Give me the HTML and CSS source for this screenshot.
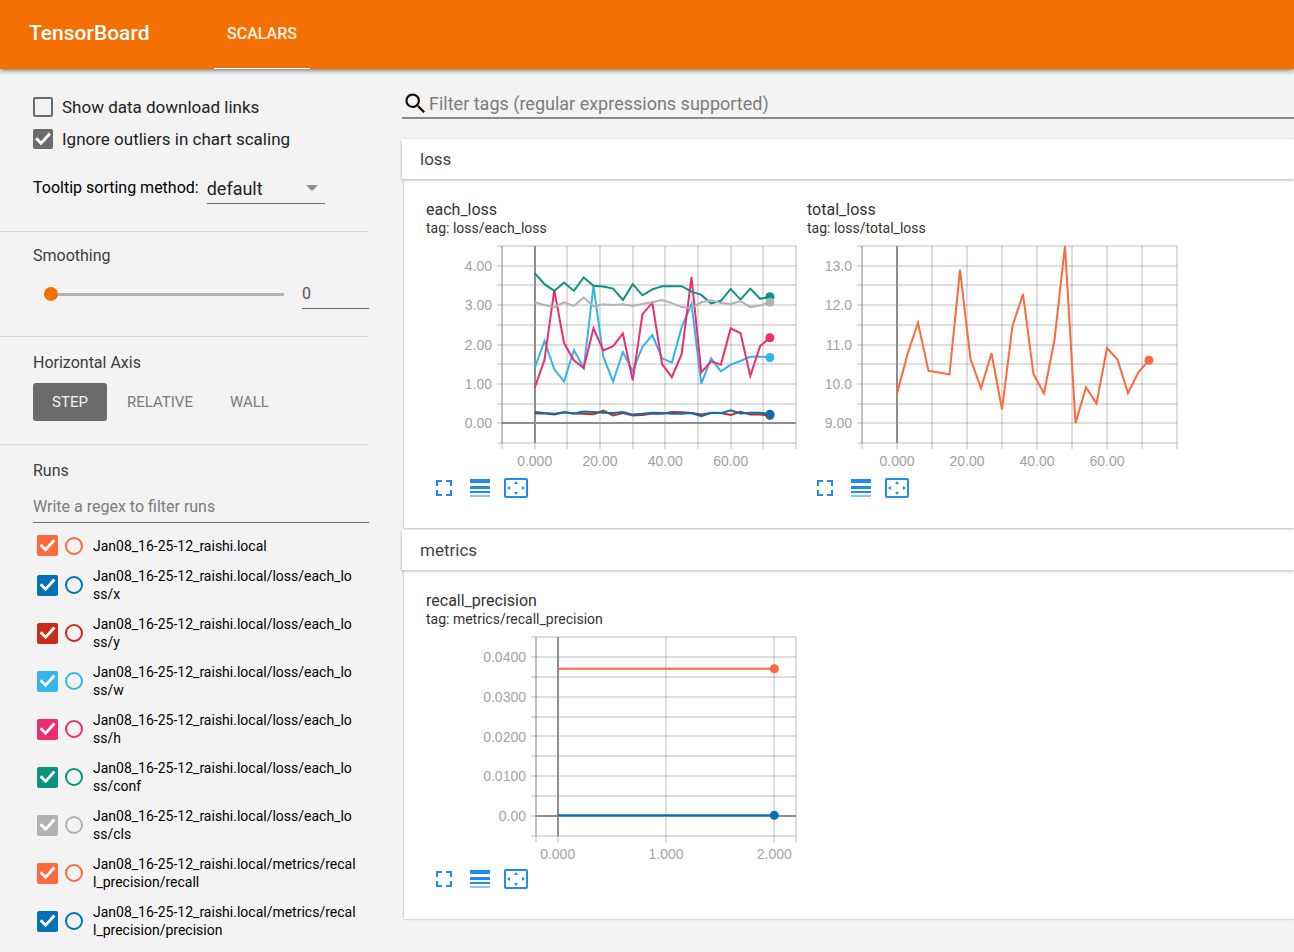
FILE: index.html
```html
<!DOCTYPE html>
<html lang="en">
<head>
    <meta charset="UTF-8">
    <meta name="viewport" content="width=device-width, initial-scale=1.0">
    <title>TensorBoard</title>
    <link rel="stylesheet" href="styles.css">
</head>
<body>

<header class="toolbar">
    <h1 class="toolbar-title">TensorBoard</h1>
    <nav class="tabs">
        <a href="#scalars" class="tab active">SCALARS</a>
    </nav>
</header>

<div class="layout">
    <aside class="sidebar">
        <section class="settings options">
            <div class="option">
                <input type="checkbox" id="downloadLinks" class="checkbox">
                <label for="downloadLinks">Show data download links</label>
            </div>
            <div class="option">
                <input type="checkbox" id="ignoreOutliers" class="checkbox" checked>
                <label for="ignoreOutliers">Ignore outliers in chart scaling</label>
            </div>
            <div class="tooltip-sort">
                <label for="tooltipSort">Tooltip sorting method:</label>
                <div class="dropdown">
                    <select id="tooltipSort">
                        <option>default</option>
                        <option>descending</option>
                        <option>ascending</option>
                        <option>nearest</option>
                    </select>
                </div>
            </div>
        </section>

        <section class="settings smoothing">
            <h2 id="smoothingTitle">Smoothing</h2>
            <div class="slider-row">
                <input type="range" id="smoothing" class="slider" min="0" max="1" step="0.001" value="0" aria-labelledby="smoothingTitle">
                <input type="text" id="smoothingValue" class="slider-value" value="0" aria-labelledby="smoothingTitle">
            </div>
        </section>

        <section class="settings axis">
            <h2>Horizontal Axis</h2>
            <div class="axis-buttons">
                <button type="button" class="axis-button selected">STEP</button>
                <button type="button" class="axis-button">RELATIVE</button>
                <button type="button" class="axis-button">WALL</button>
            </div>
        </section>

        <section class="settings runs">
            <h2>Runs</h2>
            <input type="text" class="runs-filter" placeholder="Write a regex to filter runs" aria-label="Write a regex to filter runs">
            <div class="run orange">
                <input type="checkbox" id="run0" class="checkbox" checked>
                <input type="radio" name="isolate" class="isolate" aria-label="Isolate run">
                <label for="run0">Jan08_16-25-12_raishi.local</label>
            </div>
            <div class="run blue">
                <input type="checkbox" id="run1" class="checkbox" checked>
                <input type="radio" name="isolate" class="isolate" aria-label="Isolate x">
                <label for="run1">Jan08_16-25-12_raishi.local/loss/each_loss/x</label>
            </div>
            <div class="run red">
                <input type="checkbox" id="run2" class="checkbox" checked>
                <input type="radio" name="isolate" class="isolate" aria-label="Isolate y">
                <label for="run2">Jan08_16-25-12_raishi.local/loss/each_loss/y</label>
            </div>
            <div class="run cyan">
                <input type="checkbox" id="run3" class="checkbox" checked>
                <input type="radio" name="isolate" class="isolate" aria-label="Isolate w">
                <label for="run3">Jan08_16-25-12_raishi.local/loss/each_loss/w</label>
            </div>
            <div class="run pink">
                <input type="checkbox" id="run4" class="checkbox" checked>
                <input type="radio" name="isolate" class="isolate" aria-label="Isolate h">
                <label for="run4">Jan08_16-25-12_raishi.local/loss/each_loss/h</label>
            </div>
            <div class="run teal">
                <input type="checkbox" id="run5" class="checkbox" checked>
                <input type="radio" name="isolate" class="isolate" aria-label="Isolate conf">
                <label for="run5">Jan08_16-25-12_raishi.local/loss/each_loss/conf</label>
            </div>
            <div class="run gray">
                <input type="checkbox" id="run6" class="checkbox" checked>
                <input type="radio" name="isolate" class="isolate" aria-label="Isolate cls">
                <label for="run6">Jan08_16-25-12_raishi.local/loss/each_loss/cls</label>
            </div>
            <div class="run orange">
                <input type="checkbox" id="run7" class="checkbox" checked>
                <input type="radio" name="isolate" class="isolate" aria-label="Isolate recall">
                <label for="run7">Jan08_16-25-12_raishi.local/metrics/recall_precision/recall</label>
            </div>
            <div class="run blue">
                <input type="checkbox" id="run8" class="checkbox" checked>
                <input type="radio" name="isolate" class="isolate" aria-label="Isolate precision">
                <label for="run8">Jan08_16-25-12_raishi.local/metrics/recall_precision/precision</label>
            </div>
        </section>
    </aside>

    <main class="content" id="scalars">
        <div class="tag-filter">
            <svg class="search-icon" viewBox="0 0 24 24"><path d="M15.5 14h-.79l-.28-.27A6.471 6.471 0 0 0 16 9.5 6.5 6.5 0 1 0 9.500 16c1.610 0 3.090-.59 4.230-1.570l.27.28v.79l5 4.990L20.490 19l-4.990-5zm-6 0C7.010 14 5 11.990 5 9.500S7.010 5 9.500 5 14 7.010 14 9.500 11.990 14 9.500 14z"/></svg>
            <input type="text" placeholder="Filter tags (regular expressions supported)" aria-label="Filter tags">
        </div>

        <section class="category">
            <button type="button" class="category-name">loss</button>
            <div class="category-body">
                <article class="card">
                    <h3>each_loss</h3>
                    <p>tag: loss/each_loss</p>
                    <svg class="chart" id="eachLoss" viewBox="0 0 371 232"></svg>
                    <div class="card-actions"></div>
                </article>
                <article class="card">
                    <h3>total_loss</h3>
                    <p>tag: loss/total_loss</p>
                    <svg class="chart" id="totalLoss" viewBox="0 0 371 232"></svg>
                    <div class="card-actions"></div>
                </article>
            </div>
        </section>

        <section class="category">
            <button type="button" class="category-name">metrics</button>
            <div class="category-body">
                <article class="card">
                    <h3>recall_precision</h3>
                    <p>tag: metrics/recall_precision</p>
                    <svg class="chart" id="recallPrecision" viewBox="0 0 371 232"></svg>
                    <div class="card-actions"></div>
                </article>
            </div>
        </section>
    </main>
</div>

<script src="script.js"></script>
</body>
</html>
```
FILE: styles.css
```css
* {
    box-sizing: border-box;
}

body {
    font-family: Roboto, "Liberation Sans", sans-serif;
    margin: 0;
    background-color: #f3f3f3;
    color: #212121;
}

h1, h2, h3, p {
    margin: 0;
    font-weight: 400;
}

input, select, button {
    font-family: inherit;
    margin: 0;
    padding: 0;
    border: none;
    border-radius: 0;
    background: none;
    outline: none;
}

/* toolbar */
.toolbar {
    position: relative;
    display: flex;
    height: 69px;
    padding-left: 29px;
    background-color: #f57003;
    box-shadow: 0 1px 5px rgba(0, 0, 0, 0.6);
    color: white;
}

.toolbar-title {
    width: 185px;
    font-size: 21px;
    font-weight: 500;
    line-height: 67px;
}

.tab {
    display: block;
    height: 69px;
    padding: 0 13px;
    border-bottom: 1px solid white;
    color: #fff3e8;
    font-size: 16px;
    font-weight: 500;
    line-height: 67px;
    text-decoration: none;
}

.layout {
    display: flex;
}

/* sidebar */
.sidebar {
    flex: none;
    width: 369px;
}

.settings {
    padding-left: 33px;
    border-bottom: 1px solid #d6d6d6;
}

.settings h2 {
    color: #3c3c3c;
    font-size: 16px;
    line-height: 20px;
}

.options {
    height: 163px;
    padding-top: 22px;
}

.option {
    display: flex;
    align-items: center;
    gap: 9px;
    height: 32px;
    font-size: 17px;
}

.checkbox {
    appearance: none;
    display: grid;
    flex: none;
    place-items: center;
    width: 20px;
    height: 20px;
    border: 2px solid #6b6b6b;
    border-radius: 2px;
}

.checkbox:checked {
    background-color: #6b6b6b;
}

.checkbox:checked::after {
    content: "";
    width: 16px;
    height: 14px;
    background-color: white;
    clip-path: polygon(0 52%, 14% 38%, 38% 66%, 86% 4%, 100% 18%, 38% 94%);
}

.tooltip-sort {
    display: flex;
    align-items: center;
    gap: 8px;
    margin-top: 16px;
    color: black;
    font-size: 16px;
}

.dropdown {
    display: flex;
    align-items: center;
    width: 118px;
    height: 33px;
    padding-top: 2px;
    border-bottom: 1px solid #6e6e6e;
}

.dropdown::after {
    content: "";
    margin-left: -19px;
    border: 6px solid transparent;
    border-top-color: #8c8c8c;
    border-bottom: none;
    pointer-events: none;
}

.dropdown select {
    appearance: none;
    width: 118px;
    color: #212121;
    font-size: 18px;
}

.smoothing {
    height: 105px;
    padding-top: 14px;
}

.slider-row {
    display: flex;
    align-items: center;
    gap: 18px;
    margin-top: 13px;
    padding-left: 11px;
}

.slider {
    appearance: none;
    flex: 1;
    min-width: 0;
    height: 14px;
    background: linear-gradient(#b3b3b3, #b3b3b3) center / 100% 3px no-repeat;
}

.slider::-webkit-slider-thumb {
    appearance: none;
    width: 14px;
    height: 14px;
    border-radius: 50%;
    background-color: #f57003;
}

.slider-value {
    width: 67px;
    height: 30px;
    border-bottom: 1px solid #6e6e6e;
    color: #555;
    font-size: 16px;
}

.axis {
    height: 108px;
    padding-top: 16px;
}

.axis-buttons {
    display: flex;
    gap: 3px;
    margin-top: 10px;
}

.axis-button {
    height: 38px;
    padding: 0 17px;
    border-radius: 3px;
    color: #7b7b7b;
    font-size: 15px;
}

.axis-button.selected {
    width: 74px;
    background-color: #6b6b6b;
    color: #f3f3f3;
}

.runs {
    padding-top: 16px;
    border-bottom: none;
}

.runs-filter {
    width: 100%;
    height: 32px;
    margin: 10px 0 7px;
    border-bottom: 1px solid #6e6e6e;
    font-size: 16px;
}

::placeholder {
    color: #7c7c7c;
    opacity: 1;
}

.run {
    display: flex;
    align-items: center;
    padding: 6px 11px 6px 4px;
    color: black;
    font-size: 14px;
    line-height: 18px;
}

.run label {
    flex: 1;
    margin-left: 10px;
    word-break: break-all;
}

.run .checkbox {
    width: 21px;
    height: 21px;
    margin: -1px 0;
    border: none;
    background-color: currentColor;
}

.isolate {
    appearance: none;
    flex: none;
    width: 18px;
    height: 18px;
    margin-left: 7px;
    border: 2px solid currentColor;
    border-radius: 50%;
}

.orange input { color: #ff693c; }
.blue input { color: #0470b6; }
.red input { color: #c92c16; }
.cyan input { color: #33b4ea; }
.pink input { color: #ec2d70; }
.teal input { color: #0b9380; }
.gray input { color: #b2b2b2; }

/* content */
.content {
    flex: 1;
    min-width: 0;
    padding: 20px 0 0 33px;
    overflow: hidden;
}

.tag-filter {
    display: flex;
    align-items: center;
    height: 30px;
    margin-bottom: 20px;
    border-bottom: 2px solid #8a8a8a;
}

.search-icon {
    flex: none;
    width: 27px;
    height: 27px;
    fill: #111;
}

.tag-filter input {
    flex: 1;
    font-size: 18px;
}

.category {
    margin-bottom: 2px;
}

.category-name {
    position: relative;
    display: block;
    width: 100%;
    height: 40px;
    padding-left: 18px;
    background-color: white;
    box-shadow: 0 1px 3px rgba(0, 0, 0, 0.3);
    color: #424242;
    font-size: 17px;
    text-align: left;
}

.category-body {
    display: flex;
    gap: 10px;
    height: 349px;
    margin-left: 2px;
    padding: 22px;
    background-color: white;
    box-shadow: 0 0 2px rgba(0, 0, 0, 0.35);
}

.card {
    width: 371px;
    color: #333;
}

.card h3 {
    font-size: 16px;
    line-height: 18px;
}

.card p {
    font-size: 14px;
    line-height: 18px;
}

.chart {
    display: block;
    width: 371px;
    height: 232px;
    margin-top: 3px;
}

.chart text {
    fill: #a2a2a2;
    font-family: "Liberation Sans", sans-serif;
    font-size: 14px;
}

.chart .grid {
    stroke: #000;
    stroke-opacity: 0.13;
    stroke-width: 2;
}

.chart .zero {
    stroke: #8e8e8e;
    stroke-width: 2;
}

.chart .series {
    fill: none;
    stroke-width: 2;
}

.card-actions {
    display: flex;
    height: 28px;
    margin-top: 2px;
}

.card-actions button {
    display: flex;
    align-items: center;
    justify-content: center;
    width: 36px;
}

.card-actions svg {
    width: 26px;
    height: 22px;
    fill: #1e8af2;
}
```
FILE: script.js
```js
const charts = [
    {
        id: 'eachLoss',
        left: 76, right: 370, bottom: 203,
        x: [-10, 80], xStep: 10, xLabels: [[0, '0.000'], [20, '20.00'], [40, '40.00'], [60, '60.00']],
        y: [-0.5, 4.5], yStep: 0.5, yLabels: [[4, '4.00'], [3, '3.00'], [2, '2.00'], [1, '1.00'], [0, '0.00']],
        step: 3,
        series: [
            { color: '#c92c16', data: [.25, .25, .22, .28, .25, .24, .23, .32, .2, .26, .2, .21, .25, .24, .29, .28, .26, .22, .26, .26, .21, .29, .22, .22, .2] },
            { color: '#0470b6', data: [.29, .26, .24, .28, .25, .3, .29, .27, .26, .29, .22, .24, .27, .26, .24, .24, .26, .18, .27, .26, .33, .25, .27, .27, .23] },
            { color: '#33b4ea', data: [1.4, 2.09, 1.37, 1.06, 1.86, 1.4, 3.49, 1.69, 1.06, 1.81, 1.33, 1.94, 2.24, 1.65, 1.54, 2.44, 3.03, 1, 1.65, 1.32, 1.49, 1.58, 1.69, 1.69, 1.67] },
            { color: '#ec2d70', data: [.9, 1.61, 3.38, 2.03, 1.6, 1.4, 2.41, 1.85, 1.96, 2.28, 1.09, 2.77, 3.06, 1.5, 1.17, 1.76, 3.71, 1.29, 1.57, 1.49, 2.41, 2.29, 1.2, 1.96, 2.17] },
            { color: '#0b9380', data: [3.81, 3.53, 3.36, 3.57, 3.36, 3.7, 3.49, 3.47, 3.42, 3.13, 3.53, 3.25, 3.4, 3.48, 3.48, 3.48, 3.34, 3.26, 3.04, 3.11, 3.41, 3.14, 3.42, 3.16, 3.21] },
            { color: '#b2b2b2', data: [3.07, 3, 2.95, 3.07, 2.98, 3.19, 2.97, 3.02, 3, 3.02, 2.98, 3.03, 3.07, 3.13, 3.05, 2.95, 2.93, 3.07, 3.12, 3.05, 3.03, 3.1, 2.95, 2.99, 3.07] },
        ],
    },
    {
        id: 'totalLoss',
        left: 55, right: 370, bottom: 203,
        x: [-10, 80], xStep: 10, xLabels: [[0, '0.000'], [20, '20.00'], [40, '40.00'], [60, '60.00']],
        y: [8.5, 13.5], yStep: 0.5, yLabels: [[13, '13.0'], [12, '12.0'], [11, '11.0'], [10, '10.0'], [9, '9.00']],
        step: 3,
        series: [
            { color: '#ff693c', data: [9.75, 10.76, 11.55, 10.33, 10.29, 10.24, 12.9, 10.63, 9.89, 10.78, 9.35, 11.47, 12.28, 10.25, 9.76, 11.12, 13.5, 9, 9.92, 9.5, 10.91, 10.62, 9.77, 10.3, 10.6] },
        ],
    },
    {
        id: 'recallPrecision',
        left: 110, right: 370, bottom: 205,
        x: [-0.2, 2.2], xStep: 1, xLabels: [[0, '0.000'], [1, '1.000'], [2, '2.000']],
        y: [-0.005, 0.045], yStep: 0.005, yLabels: [[0.04, '0.0400'], [0.03, '0.0300'], [0.02, '0.0200'], [0.01, '0.0100'], [0, '0.00']],
        step: 1,
        series: [
            { color: '#ff693c', data: [0.037, 0.037, 0.037] },
            { color: '#0470b6', data: [0.0002, 0.0002, 0.0002] },
        ],
    },
];

const actions = `
    <button type="button" aria-label="Toggle full size">
        <svg viewBox="0 0 26 22"><path d="M5 3h6v2H7v4H5zM15 3h6v6h-2V5h-4zM5 13h2v4h4v2H5zM19 13h2v6h-6v-2h4z"/></svg>
    </button>
    <button type="button" aria-label="Toggle y-axis log scale">
        <svg viewBox="0 0 26 22"><path d="M3 2h20v4H3zM3 9h20v3H3zM3 14h20v2H3z"/><path opacity=".5" d="M3 18h20v2H3z"/></svg>
    </button>
    <button type="button" aria-label="Fit domain to data">
        <svg viewBox="0 0 26 22"><path fill-rule="evenodd" d="M3 1h20a2 2 0 0 1 2 2v16a2 2 0 0 1-2 2H3a2 2 0 0 1-2-2V3a2 2 0 0 1 2-2zM3 3v16h20V3zM13 4l2 3h-4zM13 18l-2-3h4zM4 11l3-2v4zM22 11l-3 2V9z"/></svg>
    </button>`;

function drawChart(chart) {
    const top = 6;
    const { left, right, bottom } = chart;
    const px = v => left + (v - chart.x[0]) / (chart.x[1] - chart.x[0]) * (right - left);
    const py = v => bottom - (v - chart.y[0]) / (chart.y[1] - chart.y[0]) * (bottom - top);
    const line = (cls, x1, y1, x2, y2) => `<line class="${cls}" x1="${x1}" y1="${y1}" x2="${x2}" y2="${y2}"/>`;
    let out = '';

    // grid
    for (let v = chart.y[0]; v < chart.y[1] + chart.yStep / 2; v += chart.yStep) {
        const y = Math.round(py(v));
        out += line('grid', left - 5, y, right, y);
    }
    for (let v = Math.ceil(chart.x[0]); v <= chart.x[1]; v += chart.xStep) {
        const x = Math.round(px(v));
        out += line('grid', x, top, x, bottom + 6);
    }
    if (chart.xStep === 1) {
        out += line('grid', left, top, left, bottom + 6);
        out += line('grid', right, top, right, bottom + 6);
    }

    // axes
    out += line('grid', left, top, left, bottom);
    out += line('zero', Math.round(px(0)), top, Math.round(px(0)), bottom);
    if (chart.y[0] < 0) {
        out += line('zero', left, Math.round(py(0)), right, Math.round(py(0)));
    }

    chart.yLabels.forEach(([v, text]) => {
        out += `<text x="${left - 10}" y="${py(v) + 5}" text-anchor="end">${text}</text>`;
    });
    chart.xLabels.forEach(([v, text]) => {
        out += `<text x="${px(v)}" y="${bottom + 23}" text-anchor="middle">${text}</text>`;
    });

    // series
    chart.series.forEach(s => {
        const points = s.data.map((v, i) => `${px(i * chart.step).toFixed(1)},${py(v).toFixed(1)}`);
        const [cx, cy] = points[points.length - 1].split(',');
        out += `<polyline class="series" stroke="${s.color}" points="${points.join(' ')}"/>`;
        out += `<circle cx="${cx}" cy="${cy}" r="4.5" fill="${s.color}"/>`;
    });

    document.getElementById(chart.id).innerHTML = out;
}

charts.forEach(drawChart);
document.querySelectorAll('.card-actions').forEach(el => {
    el.innerHTML = actions;
});

document.getElementById('smoothing').addEventListener('input', (e) => {
    document.getElementById('smoothingValue').value = e.target.value;
});
```
